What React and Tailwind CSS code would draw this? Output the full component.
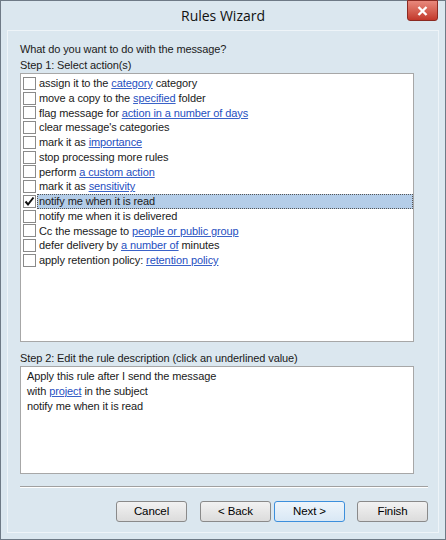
import React from "react";

const L = ({ children }) => (
  <span className="text-[#1f4fbf] underline decoration-[#3a62c8]">{children}</span>
);

const rows = [
  [<>assign it to the <L>category</L> category</>],
  [<>move a copy to the <L>specified</L> folder</>],
  [<>flag message for <L>action in a number of days</L></>],
  [<>clear message's categories</>],
  [<>mark it as <L>importance</L></>],
  [<>stop processing more rules</>],
  [<>perform <L>a custom action</L></>],
  [<>mark it as <L>sensitivity</L></>],
  [<>notify me when it is read</>, true],
  [<>notify me when it is delivered</>],
  [<>Cc the message to <L>people or public group</L></>],
  [<>defer delivery by <L>a number of</L> minutes</>],
  [<>apply retention policy: <L>retention policy</L></>],
];

function Check({ on }) {
  return (
    <div className="w-[13px] h-[13px] border border-[#8a8a8a] bg-white shrink-0 flex items-center justify-center">
      {on && (
        <svg width="11" height="11" viewBox="0 0 11 11">
          <path d="M1.5 5.5 L4 8.5 L9.5 1.5" stroke="#111" strokeWidth="2" fill="none" />
        </svg>
      )}
    </div>
  );
}

function Btn({ children, focus }) {
  return (
    <div
      className={`w-[71px] h-[21px] rounded-[3px] border flex items-center justify-center text-[11.5px] text-black ${
        focus ? "border-[#3c8fdc] bg-gradient-to-b from-[#eef5fb] to-[#d9e8f5]" : "border-[#8a8a8a] bg-gradient-to-b from-[#f2f2f2] to-[#dcdcdc]"
      }`}
    >
      {children}
    </div>
  );
}

export default function App() {
  return (
    <div
      className="w-[446px] h-[540px] bg-[#dbe7ef] border border-[#6e7a86] flex flex-col text-[11px] tracking-[-0.1px] text-[#1a1a1a]"
      style={{ fontFamily: "'Liberation Sans', Arial, sans-serif" }}
    >
      <div className="h-[29px] relative flex items-center justify-center shrink-0">
        <span className="text-[14px] tracking-normal text-[#111] mt-[-1px]" style={{ fontFamily: "'Open Sans', 'Noto Sans', sans-serif" }}>
          Rules Wizard
        </span>
        <div className="absolute right-[7px] top-[-1px] w-[31px] h-[21px] bg-gradient-to-b from-[#e8887c] to-[#c2372a] border border-[#8b2a22] rounded-b-[3px] flex items-center justify-center">
          <svg width="11" height="10" viewBox="0 0 11 10">
            <path d="M1.5 1 L9.5 9 M9.5 1 L1.5 9" stroke="#fff" strokeWidth="2.4" />
          </svg>
        </div>
      </div>
      <div className="flex-1 mx-[6px] mb-[6px] border border-[#eef4f8] flex flex-col px-[12px]">
        <div className="mt-[10px] leading-[16px]">What do you want to do with the message?</div>
        <div className="leading-[16px]">Step 1: Select action(s)</div>
        <div className="mt-[0px] w-[394px] h-[269px] bg-white border border-[#a7a7a7] pt-[2px] pl-[2px]">
          {rows.map(([c, on], i) => (
            <div key={i} className="h-[14.75px] flex items-center">
              <Check on={on} />
              <div
                className={`ml-[1px] flex-1 h-full flex items-center pl-[1px] whitespace-nowrap ${
                  on ? "bg-[#b4cde8] border border-dotted border-[#555]" : "border border-transparent"
                }`}
              >
                <span>{c}</span>
              </div>
            </div>
          ))}
        </div>
        <div className="mt-[8px] leading-[16px]">Step 2: Edit the rule description (click an underlined value)</div>
        <div className="w-[394px] h-[108px] bg-white border border-[#a7a7a7] pl-[6px] pt-[2px] leading-[14.75px]">
          <div>Apply this rule after I send the message</div>
          <div>
            with <L>project</L> in the subject
          </div>
          <div>notify me when it is read</div>
        </div>
        <div className="mt-[12px] h-[2px] border-t border-[#a0a0a0] border-b border-b-white w-[408px]" />
        <div className="mt-[13px] flex justify-end w-[408px]">
          <Btn>Cancel</Btn>
          <div className="w-[13px]" />
          <Btn>&lt; Back</Btn>
          <div className="w-[3px]" />
          <Btn focus>Next &gt;</Btn>
          <div className="w-[12px]" />
          <Btn>Finish</Btn>
        </div>
      </div>
    </div>
  );
}
